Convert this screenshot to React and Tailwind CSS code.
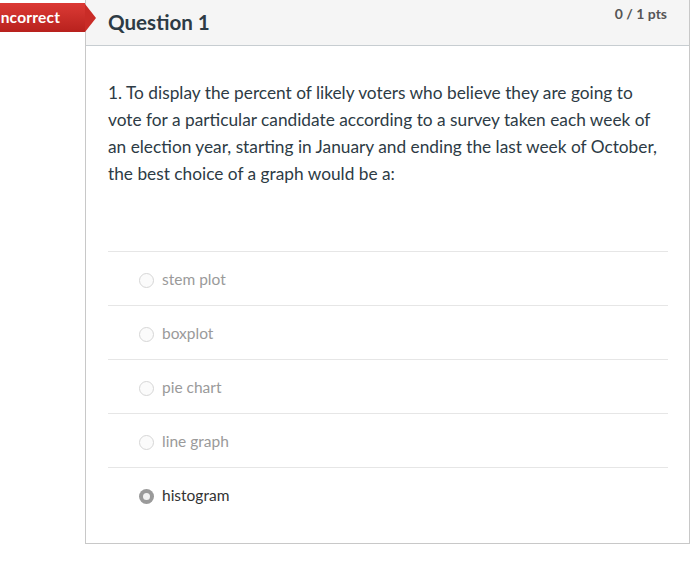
import React from "react";

const ANSWERS = [
  { id: 1, label: "stem plot" },
  { id: 2, label: "boxplot" },
  { id: 3, label: "pie chart" },
  { id: 4, label: "line graph" },
  { id: 5, label: "histogram", picked: true },
];

function Radio({ picked }) {
  if (picked) {
    return (
      <span className="w-[15px] h-[15px] rounded-full bg-[#9a9a9a] flex items-center justify-center shrink-0">
        <span className="w-[7px] h-[7px] rounded-full bg-[#f2f2f2]" />
      </span>
    );
  }
  return <span className="w-[15px] h-[15px] rounded-full border border-[#d6d6d6] bg-[#fbfbfb] shrink-0" />;
}

export default function App() {
  return (
    <div className="relative w-[700px] h-[572px] bg-white overflow-hidden" style={{ fontFamily: "Lato, 'Open Sans', sans-serif" }}>
      {/* incorrect banner */}
      <div className="absolute left-0 top-[3px] z-10 flex items-center">
        <div className="h-[29px] w-[90px] bg-gradient-to-b from-[#dc3a35] to-[#b8211d] flex items-center -ml-[5px] pl-[1px]">
          <span className="text-white font-bold text-[15.5px] leading-none tracking-[0.2px]">Incorrect</span>
        </div>
        <div className="w-0 h-0 border-y-[14.5px] border-y-transparent border-l-[11px] border-l-[#c92c27]" />
      </div>

      <div className="ml-[85px] w-[605px] h-[544px] border-l border-r border-b border-[#c8c8c8]">
        {/* header */}
        <div className="h-[46px] bg-[#f5f5f5] border-b border-[#c7cdd1] flex items-start justify-between pl-[22px] pr-[22px]">
          <h2 className="text-[20.6px] font-bold text-[#2d3b45] mt-[9px] leading-[26px]">Question 1</h2>
          <span className="text-[14px] font-bold text-[#555] mt-[3px]">0 / 1 pts</span>
        </div>

        {/* body */}
        <div className="pl-[22px] pr-[22px] pt-[33px]">
          <p className="w-[560px] text-[17.3px] leading-[27px] text-[#2d3b45]">
            1. To display the percent of likely voters who believe they are going to vote for a particular candidate according to a survey taken each week of an election year, starting in January and ending the last week of October, the best choice of a graph would be a:
          </p>

          <div className="mt-[64px] w-[560px]">
            {ANSWERS.map((a) => (
              <div key={a.id} className="h-[54px] border-t border-[#e6e6e6] flex items-center pl-[31px] gap-[8px] pt-[3px]">
                <Radio picked={a.picked} />
                <span className={a.picked ? "text-[15.5px] text-[#333]" : "text-[15.5px] text-[#9a9a9a]"}>{a.label}</span>
              </div>
            ))}
          </div>
        </div>
      </div>
    </div>
  );
}
